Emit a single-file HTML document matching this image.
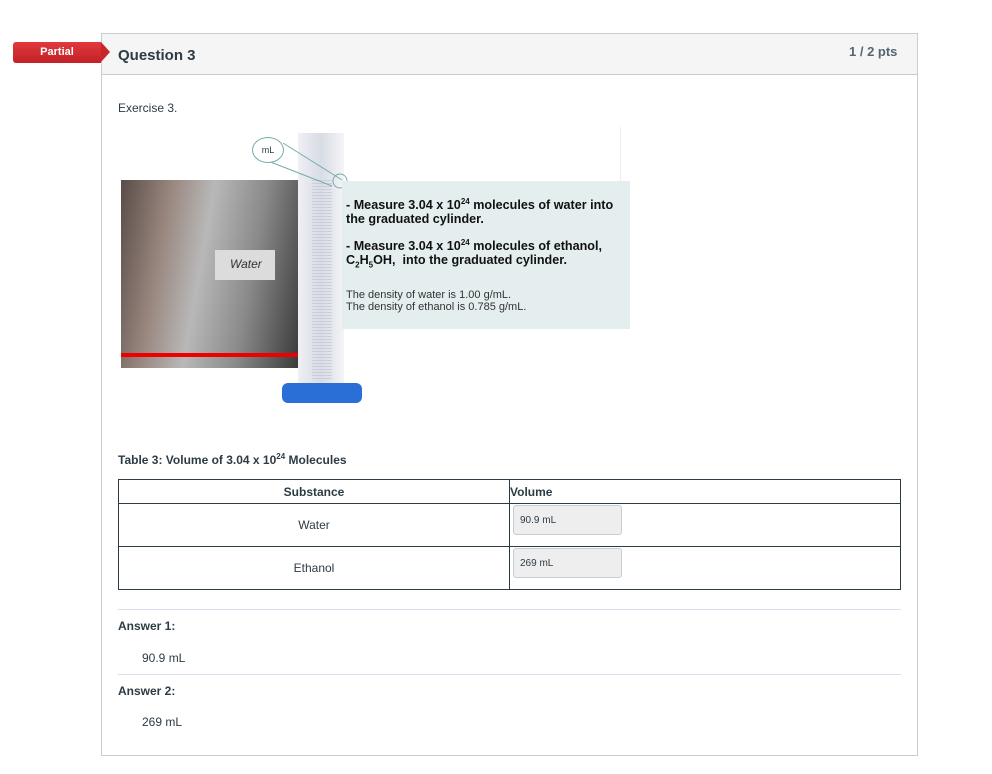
<!DOCTYPE html>
<html><head><style>
*{margin:0;padding:0;box-sizing:border-box}
body{width:992px;height:774px;background:#fff;font-family:"Liberation Sans",sans-serif;color:#2d3b45;position:relative;overflow:hidden}
.a{position:absolute}
.card{left:101px;top:33px;width:817px;height:723px;border:1px solid #c7cdd1}
.hdr{left:102px;top:34px;width:815px;height:41px;background:#f5f5f5;border-bottom:1px solid #c7cdd1}
.badge{left:13px;top:42px;width:88px;height:21px;background:linear-gradient(#e0393e,#c32127);border-radius:3px 0 0 3px;color:#fff;font-weight:bold;font-size:11px;text-align:center;line-height:21px}
.arr{left:101px;top:42px;width:0;height:0;border-top:10.5px solid transparent;border-bottom:10.5px solid transparent;border-left:9px solid #c9262c}
td{border:1px solid #2d3b45;font-size:12px}
.inp{position:absolute;width:109px;height:30px;background:#eee;border:1px solid #c7cdd1;border-radius:3px;font-size:10px;padding:9px 0 0 6px}
</style></head><body>
<div class="a card"></div>
<div class="a hdr"></div>
<div class="a badge">Partial</div><div class="a arr"></div>
<div class="a" style="left:118px;top:47px;font-size:15px;font-weight:bold">Question 3</div>
<div class="a" style="left:849px;top:44px;font-size:13px;font-weight:bold;color:#556572">1 / 2 pts</div>
<div class="a" style="left:118px;top:101px;font-size:12px">Exercise 3.</div>

<div class="a" style="left:620px;top:127px;width:1px;height:55px;background:#eee"></div>
<div class="a" style="left:121px;top:180px;width:177px;height:188px;background:linear-gradient(100deg,#5a4c48 0%,#9a8880 25%,#b8b8b8 45%,#8a8a8a 70%,#3a3a3a 100%)"></div>
<div class="a" style="left:215px;top:250px;width:60px;height:30px;background:#dcdcdc;font-size:12px;font-style:italic;color:#333;padding:7px 0 0 15px">Water</div>
<div class="a" style="left:121px;top:353px;width:177px;height:4px;background:#e00"></div>
<div class="a" style="left:298px;top:133px;width:46px;height:253px;background:linear-gradient(90deg,#eef0f4,#d8dce4,#f4f5f8)"></div>
<div class="a" style="left:312px;top:180px;width:20px;height:200px;background:repeating-linear-gradient(#ccd 0 1px,transparent 1px 3px)"></div>
<div class="a" style="left:282px;top:383px;width:80px;height:20px;background:#2a6fd6;border-radius:6px"></div>
<svg class="a" style="left:250px;top:133px" width="100" height="60"><line x1="33" y1="10" x2="92" y2="47" stroke="#7aa"/><line x1="18" y1="28" x2="82" y2="53" stroke="#7aa"/><circle cx="90" cy="48" r="7" fill="none" stroke="#7aa"/></svg>
<div class="a" style="left:252px;top:137px;width:32px;height:26px;border:1px solid #7aa;border-radius:50%;font-size:9px;text-align:center;line-height:24px;background:#fff">mL</div>
<div class="a" style="left:342px;top:181px;width:288px;height:148px;background:#e4eeee"></div>
<div class="a" style="left:346px;top:195px;font-size:12.6px;font-weight:bold;color:#111;line-height:14px;white-space:nowrap">- Measure 3.04 x 10<sup style="font-size:8px">24</sup> molecules of water into<br>the graduated cylinder.</div>
<div class="a" style="left:346px;top:236px;font-size:12.6px;font-weight:bold;color:#111;line-height:14px;white-space:nowrap">- Measure 3.04 x 10<sup style="font-size:8px">24</sup> molecules of ethanol,<br>C<sub style="font-size:8px">2</sub>H<sub style="font-size:8px">5</sub>OH,&nbsp; into the graduated cylinder.</div>
<div class="a" style="left:346px;top:289px;font-size:11px;color:#333;line-height:12px">The density of water is 1.00 g/mL.<br>The density of ethanol is 0.785 g/mL.</div>

<div class="a" style="left:118px;top:452px;font-size:12px;font-weight:bold">Table 3: Volume of 3.04 x 10<sup style="font-size:8px">24</sup> Molecules</div>
<table class="a" style="left:118px;top:479px;width:783px;border-collapse:collapse">
<tr style="height:24px"><td style="width:391px;text-align:center;font-weight:bold">Substance</td><td style="font-weight:bold">Volume</td></tr>
<tr style="height:43px"><td style="text-align:center">Water</td><td></td></tr>
<tr style="height:43px"><td style="text-align:center">Ethanol</td><td></td></tr>
</table>
<div class="inp" style="left:513px;top:505px">90.9 mL</div>
<div class="inp" style="left:513px;top:548px">269 mL</div>

<div class="a" style="left:118px;top:609px;width:783px;height:1px;background:#dde"></div>
<div class="a" style="left:118px;top:619px;font-size:12px;font-weight:bold">Answer 1:</div>
<div class="a" style="left:142px;top:651px;font-size:12px">90.9 mL</div>
<div class="a" style="left:118px;top:674px;width:783px;height:1px;background:#dde"></div>
<div class="a" style="left:118px;top:684px;font-size:12px;font-weight:bold">Answer 2:</div>
<div class="a" style="left:142px;top:715px;font-size:12px">269 mL</div>
</body></html>
